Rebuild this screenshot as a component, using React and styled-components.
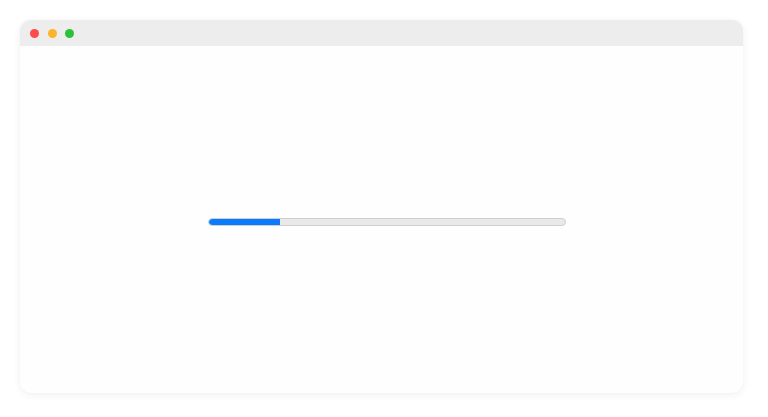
import React from "react";
import styled, { createGlobalStyle } from "styled-components";

const Global = createGlobalStyle`
  html, body { margin: 0; padding: 0; background: #ffffff; }
  body { font-family: "Liberation Sans", Arial, sans-serif; }
`;

const Page = styled.div`
  width: 768px;
  height: 417px;
  box-sizing: border-box;
  padding: 20px 25px 24px 20px;
  display: flex;
`;

const Window = styled.div`
  flex: 1;
  display: flex;
  flex-direction: column;
  border-radius: 11px;
  background: #fefefe;
  box-shadow: 0 2px 8px rgba(0, 0, 0, 0.06), 0 0 2px rgba(0, 0, 0, 0.04);
  overflow: hidden;
`;

const TitleBar = styled.div`
  height: 26px;
  flex: none;
  background: #ededed;
  display: flex;
  align-items: center;
  gap: 8.5px;
  padding-left: 10px;
`;

const Dot = styled.span`
  width: 9px;
  height: 9px;
  border-radius: 50%;
  background: ${(p) => p.$color};
`;

const Content = styled.div`
  flex: 1;
  display: flex;
  align-items: center;
  padding-left: 188px;
  padding-top: 5px;
`;

const Track = styled.div`
  width: 358px;
  height: 8px;
  box-sizing: border-box;
  border-radius: 4px;
  background: #e9e9e9;
  border: 1px solid #cfcfcf;
  overflow: hidden;
  display: flex;
`;

const Fill = styled.div`
  height: 100%;
  background: #0a7aff;
  border-radius: 4px 0 0 4px;
`;

export default function App() {
  const progress = 0.2;
  return (
    <>
      <Global />
      <Page>
        <Window>
          <TitleBar>
            <Dot $color="#fe4b4b" />
            <Dot $color="#feb42a" />
            <Dot $color="#2ac23a" />
          </TitleBar>
          <Content>
            <Track>
              <Fill style={{ width: `${progress * 100}%` }} />
            </Track>
          </Content>
        </Window>
      </Page>
    </>
  );
}
